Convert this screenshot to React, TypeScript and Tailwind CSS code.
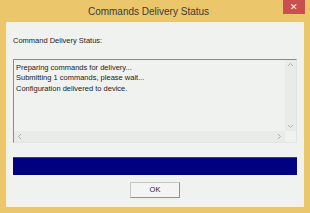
import React from "react";

export default function App() {
  const lines = [
    "Preparing commands for delivery...",
    "Submitting 1 commands, please wait...",
    "Configuration delivered to device.",
  ];

  return (
    <div className="w-[310px] h-[213px] bg-[#ecc66a] flex flex-col font-['Liberation_Sans',Arial,sans-serif] overflow-hidden">
      {/* title bar */}
      <div className="h-[22px] flex items-start shrink-0">
        <div className="flex-1 h-[22px] flex items-center justify-center pl-[14px] text-[10px] text-[#3a3a3a]">
          Commands Delivery Status
        </div>
        <div className="w-[22px] h-[14px] mr-[5px] bg-[#c9504f] flex items-center justify-center text-white text-[9px] leading-none">
          ✕
        </div>
      </div>

      {/* body */}
      <div className="mx-[6px] mb-[6px] flex-1 border border-[#f8f0da] bg-[#f0f2ef] flex flex-col px-[6px]">
        <div className="pt-[14px] text-[7.5px] text-[#222] leading-none">Command Delivery Status:</div>

        {/* text box */}
        <div className="mt-[14px] h-[84px] border-t border-l border-[#8a8a8a] border-r border-b border-r-[#e4e4e4] border-b-[#e4e4e4] flex flex-col bg-[#f0f2ef]">
          <div className="flex flex-1 min-h-0">
            <div className="flex-1 pl-[2px] pt-[3px] text-[7.5px] leading-[10.5px] text-[#222]">
              {lines.map((l) => (
                <div key={l}>{l}</div>
              ))}
            </div>
            <div className="w-[11px] bg-[#e9ebe9] flex flex-col items-center justify-between py-[2px]">
              <svg width="7" height="5" viewBox="0 0 7 5">
                <path d="M1 4 L3.5 1.5 L6 4" fill="none" stroke="#b0b0b0" strokeWidth="1" />
              </svg>
              <svg width="7" height="5" viewBox="0 0 7 5">
                <path d="M1 1 L3.5 3.5 L6 1" fill="none" stroke="#b0b0b0" strokeWidth="1" />
              </svg>
            </div>
          </div>
          <div className="h-[11px] flex">
            <div className="flex-1 bg-[#e9ebe9] flex items-center justify-between px-[3px]">
              <svg width="5" height="7" viewBox="0 0 5 7">
                <path d="M4 1 L1.5 3.5 L4 6" fill="none" stroke="#b0b0b0" strokeWidth="1" />
              </svg>
              <svg width="5" height="7" viewBox="0 0 5 7">
                <path d="M1 1 L3.5 3.5 L1 6" fill="none" stroke="#b0b0b0" strokeWidth="1" />
              </svg>
            </div>
            <div className="w-[11px] bg-[#f0f2ef]" />
          </div>
        </div>

        {/* progress bar */}
        <div className="mt-[14px] h-[18px] bg-[#000080] border-t border-[#3a3aa0]" />

        {/* OK button */}
        <div className="flex justify-center mt-[7px]">
          <div className="w-[50px] h-[16px] bg-[#f4f4f4] border border-[#c8c8c8] border-r-[#909090] border-b-[#909090] flex items-center justify-center text-[7.5px] text-[#222]">
            OK
          </div>
        </div>
      </div>
    </div>
  );
}
